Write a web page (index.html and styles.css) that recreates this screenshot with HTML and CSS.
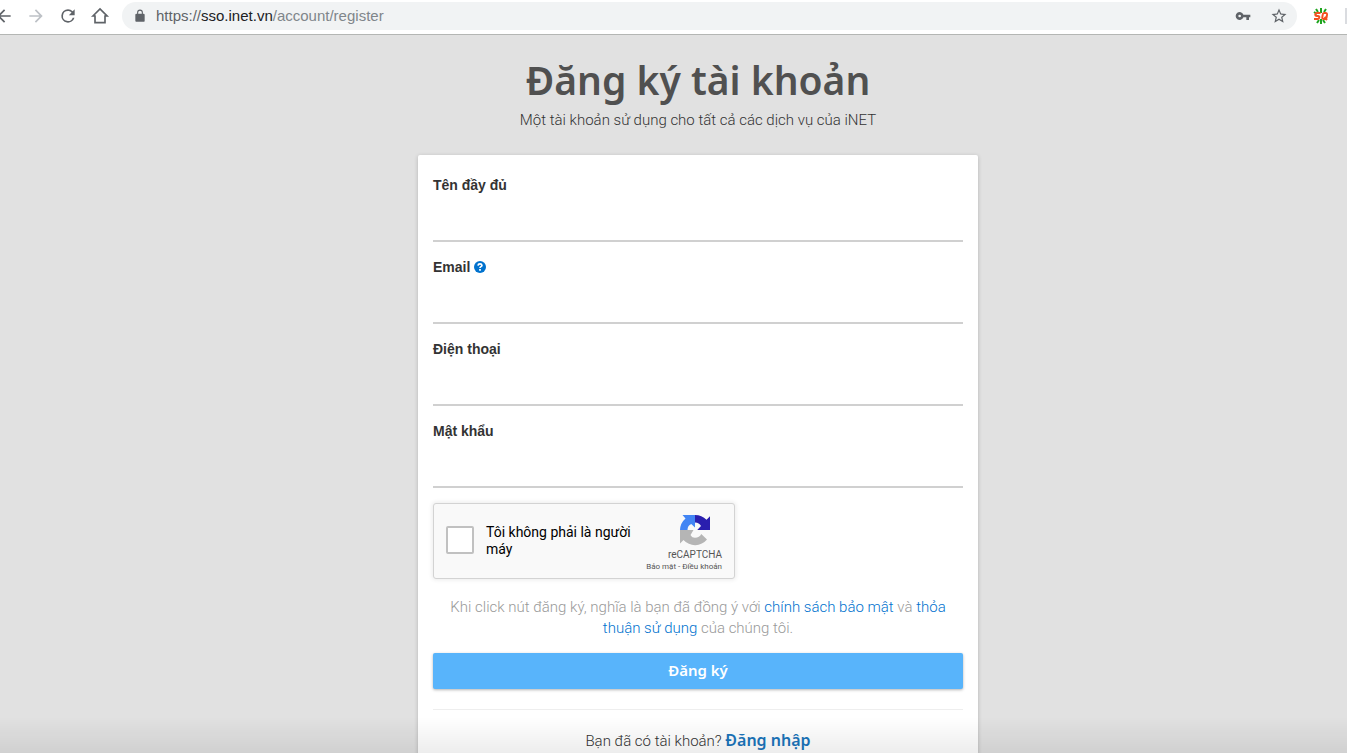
FILE: index.html
```html
<!DOCTYPE html>
<html lang="vi">
<head>
    <meta charset="UTF-8">
    <meta name="viewport" content="width=device-width, initial-scale=1.0">
    <title>Đăng ký tài khoản</title>
    <link rel="stylesheet" href="styles.css">
</head>
<body>
    <header class="toolbar">
        <button type="button" class="tool back" aria-label="Back">
            <svg width="20" height="20" viewBox="0 0 24 24"><path d="M20 11H7.83l5.59-5.59L12 4l-8 8 8 8 1.41-1.41L7.83 13H20v-2z"/></svg>
        </button>
        <button type="button" class="tool forward" aria-label="Forward">
            <svg width="20" height="20" viewBox="0 0 24 24"><path d="M12 4l-1.41 1.41L16.17 11H4v2h12.17l-5.58 5.59L12 20l8-8z"/></svg>
        </button>
        <button type="button" class="tool" aria-label="Reload">
            <svg width="20" height="20" viewBox="0 0 24 24"><path d="M17.65 6.35A7.96 7.96 0 0 0 12 4a8 8 0 1 0 7.73 10h-2.08A6 6 0 1 1 12 6c1.66 0 3.14.69 4.22 1.78L13 11h7V4l-2.35 2.35z"/></svg>
        </button>
        <button type="button" class="tool" aria-label="Home">
            <svg width="20" height="20" viewBox="0 0 24 24"><path d="M3.5 12L12 3.5 20.5 12H18v8H6v-8z" fill="none" stroke="currentColor" stroke-width="2"/></svg>
        </button>
        <div class="address">
            <svg width="14" height="14" viewBox="0 0 24 24"><path d="M18 8h-1V6A5 5 0 0 0 7 6v2H6a2 2 0 0 0-2 2v10c0 1.1.9 2 2 2h12a2 2 0 0 0 2-2V10a2 2 0 0 0-2-2zM8.9 8V6a3.1 3.1 0 0 1 6.2 0v2z"/></svg>
            <span class="url">https://<b>sso.inet.vn</b><i>/account/register</i></span>
            <svg class="key" width="16" height="16" viewBox="0 0 24 24"><path d="M12.65 10A6 6 0 1 0 12.65 14H17v4h4v-4h2v-4H12.65zM7 14a2 2 0 1 1 0-4 2 2 0 0 1 0 4z"/></svg>
            <svg width="18" height="18" viewBox="0 0 24 24"><path d="M22 9.24l-7.19-.62L12 2 9.19 8.63 2 9.24l5.46 4.73L5.82 21 12 17.27 18.18 21l-1.63-7.03L22 9.24zM12 15.4l-3.76 2.27 1-4.28-3.32-2.88 4.38-.38L12 6.1l1.71 4.04 4.38.38-3.32 2.88 1 4.28L12 15.4z"/></svg>
        </div>
        <svg class="extension" width="16" height="16" viewBox="0 0 16 16">
            <path d="M8 0v5M3 1l2 3M13 1l-2 3M8 16v-5M4 15l2-3M12 15l-2-3M1 4l3 2" stroke="#1fa51f" stroke-width="2"/>
            <path d="M7.5 5H4Q2.5 5 2.3 6.500T3.800 8H5q1.500 0 1.300 1.500T4.500 11H1" fill="none" stroke="#f4511e" stroke-width="2"/>
            <path d="M11 5h1.500q1.700 0 1.500 1.700l-.4 2.600q-.3 1.700-1.800 1.700h-1q-1.700 0-1.500-1.700l.4-2.600Q9.900 5 11 5zM11.500 9l2.500 3" fill="none" stroke="#f4511e" stroke-width="2"/>
        </svg>
        <span class="divider"></span>
    </header>

    <main class="page">
        <h1>Đăng ký tài khoản</h1>
        <p class="subtitle">Một tài khoản sử dụng cho tất cả các dịch vụ của iNET</p>

        <form class="card">
            <div class="field">
                <label for="fullname">Tên đầy đủ</label>
                <input type="text" id="fullname" name="fullname">
            </div>
            <div class="field">
                <label for="email">Email
                    <svg class="help" width="12" height="12" viewBox="0 0 12 12"><circle cx="6" cy="6" r="6" fill="#0072ce"/><path d="M4 4.6Q4.200 2.900 6 2.900t1.900 1.500c0 1.300-1.900 1.200-1.900 2.600" fill="none" stroke="#fff" stroke-width="1.7"/><path d="M5.100 8h1.800v1.700H5.100z" fill="#fff"/></svg>
                </label>
                <input type="email" id="email" name="email">
            </div>
            <div class="field">
                <label for="phone">Điện thoại</label>
                <input type="tel" id="phone" name="phone">
            </div>
            <div class="field">
                <label for="password">Mật khẩu</label>
                <input type="password" id="password" name="password">
            </div>

            <div class="captcha">
                <input type="checkbox" id="robot" name="robot">
                <label for="robot">Tôi không phải là người máy</label>
                <div class="captcha-brand">
                    <svg width="32" height="32" viewBox="0 0 64 64">
                        <path d="M62 32V4.500l-7 7A32 32 0 0 0 32 2v15c6 0 9.500 2.500 12 7L36.500 32z" fill="#2a1fae"/>
                        <path d="M32 2H7l6 7A32 32 0 0 0 2 32h15c0-6 2.500-9.500 7.500-12l7.500 7z" fill="#4285f4"/>
                        <path d="M2 32v27l7-7A31 31 0 0 0 56 51L44.500 40c-2.500 5-6.500 7.500-12.500 7.500-4 0-6.500-1.500-9-5.500l6-10z" fill="#b5b5b5"/>
                    </svg>
                    <span class="captcha-name">reCAPTCHA</span>
                    <span class="captcha-links"><a href="#">Bảo mật</a> - <a href="#">Điều khoản</a></span>
                </div>
            </div>

            <p class="terms">Khi click nút đăng ký, nghĩa là bạn đã đồng ý với <a href="#">chính sách bảo mật</a> và <a href="#">thỏa thuận sử dụng</a> của chúng tôi.</p>
            <button type="submit" class="submit">Đăng ký</button>
            <p class="login">Bạn đã có tài khoản? <a href="#">Đăng nhập</a></p>
        </form>
    </main>
    <div class="fade"></div>
</body>
</html>
```
FILE: styles.css
```css
* {
    box-sizing: border-box;
}
body {
    margin: 0;
    height: 100vh;
    overflow: hidden;
    background-color: #e1e1e1;
    color: #333;
    font-family: Roboto, "Liberation Sans", sans-serif;
    font-size: 15px;
    font-weight: 300;
}
a {
    color: #0072ce;
    text-decoration: none;
}

/* browser toolbar */
.toolbar {
    display: flex;
    align-items: center;
    height: 35px;
    padding-bottom: 3px;
    overflow: hidden;
    background-color: #fff;
    border-bottom: 1px solid #b4b6b4;
}
.tool {
    display: flex;
    flex: none;
    margin-right: 12px;
    padding: 0;
    border: 0;
    background: none;
    color: #5f6368;
}
.back {
    margin-left: -6px;
}
.forward {
    color: #bdc1c6;
}
svg {
    flex: none;
    fill: currentColor;
}
.address {
    display: flex;
    flex: 1;
    align-items: center;
    height: 28px;
    padding: 0 9px 0 11px;
    border-radius: 14px;
    background-color: #f1f3f4;
    color: #5f6368;
}
.url {
    flex: 1;
    margin-left: 9px;
    font-family: "Liberation Sans", Arial, sans-serif;
    font-size: 15px;
    font-weight: 400;
}
.url b {
    color: #202124;
    font-weight: 400;
}
.url i {
    color: #80868b;
    font-style: normal;
}
.key {
    margin-right: 19px;
}
.extension {
    margin: 0 16px;
}
.divider {
    width: 2px;
    height: 16px;
    background-color: #dadce0;
}

/* register form */
.page {
    padding: 20px 0 0 49px;
    text-align: center;
}
h1 {
    margin: 0;
    color: #505050;
    font-family: "Noto Sans", "Open Sans", sans-serif;
    font-size: 39px;
    font-weight: 600;
    line-height: 50px;
}
.subtitle {
    margin: 5px 0 24px;
    line-height: 21px;
}
.card {
    max-width: 560px;
    margin: 0 auto;
    padding: 20px 15px;
    border-radius: 2px;
    background-color: #fff;
    box-shadow: 0 1px 4px rgba(0, 0, 0, 0.2);
}
.field {
    margin-bottom: 15px;
    text-align: left;
}
.field label {
    display: block;
    font-family: "Liberation Sans", Arial, sans-serif;
    font-size: 14px;
    font-weight: 700;
    line-height: 20px;
}
.help {
    vertical-align: -1px;
}
.field input {
    display: block;
    width: 100%;
    height: 47px;
    padding: 0;
    border: 0;
    border-bottom: 2px solid #d0d0d0;
    outline: none;
    background: none;
    font-size: 16px;
}
.captcha {
    display: flex;
    align-items: center;
    width: 302px;
    height: 76px;
    padding: 0 12px;
    border: 1px solid #d3d3d3;
    border-radius: 3px;
    background-color: #f9f9f9;
    box-shadow: 0 0 4px 1px rgba(0, 0, 0, 0.08);
    color: #000;
    font-family: Roboto, sans-serif;
    font-weight: 400;
    text-align: left;
}
.captcha input {
    flex: none;
    width: 28px;
    height: 28px;
    margin: 0 12px 2px 0;
    appearance: none;
    border: 2px solid #c1c1c1;
    border-radius: 2px;
    background-color: #fff;
}
.captcha label {
    flex: 1;
    font-size: 14px;
    line-height: 17px;
}
.captcha-brand {
    display: flex;
    flex-direction: column;
    align-items: flex-end;
    padding-top: 5px;
    color: #555;
}
.captcha-brand svg {
    margin-right: 11px;
}
.captcha-name {
    margin-top: 3px;
    font-size: 10px;
    line-height: 12px;
}
.captcha-links {
    font-size: 8px;
    line-height: 12px;
}
.captcha-links a {
    color: #555;
}
.terms {
    margin: 18px 0 14px;
    color: #999;
    line-height: 21px;
}
.submit {
    display: block;
    width: 100%;
    height: 36px;
    padding: 0 0 2px;
    border: 0;
    border-radius: 2px;
    background-color: #58b4fb;
    box-shadow: 0 1px 3px rgba(0, 0, 0, 0.3);
    color: #fff;
    font-family: "Noto Sans", "Open Sans", sans-serif;
    font-size: 15px;
    font-weight: 600;
}
.login {
    margin: 20px 0 0;
    padding-top: 18px;
    border-top: 1px solid #eee;
    line-height: 24px;
}
.login a {
    color: #1b75bb;
    font-family: "Noto Sans", "Open Sans", sans-serif;
    font-size: 16px;
    font-weight: 600;
}

/* shading along the bottom edge of the window */
.fade {
    position: fixed;
    right: 0;
    bottom: 0;
    left: 0;
    height: 36px;
    background: linear-gradient(rgba(0, 0, 0, 0), rgba(0, 0, 0, 0.07));
    pointer-events: none;
}
```
